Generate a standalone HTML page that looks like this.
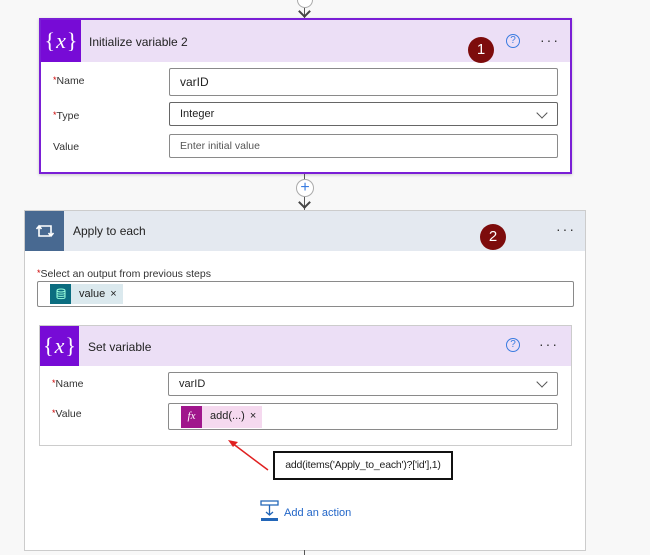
<!DOCTYPE html>
<html><head><style>
*{box-sizing:border-box;margin:0;padding:0}
body{width:650px;height:555px;background:#f8f8f8;position:relative;overflow:hidden;font-family:"Liberation Sans",sans-serif;font-size:11px;color:#222}
.a{position:absolute}
.card{position:absolute;background:#fff}
.hdr{position:absolute;left:0;right:0;top:0}
.ico{position:absolute;left:0;top:0;bottom:0;color:#fff;font-family:"Liberation Serif",serif;font-size:22px;display:flex;align-items:center;justify-content:center}
.t{position:absolute;font-size:12px;color:#222}
.in{position:absolute;background:#fff;border:1px solid #8a8a8a;border-radius:2px;font-size:11px;padding-left:10px;display:flex;align-items:center;line-height:1}
.lbl{position:absolute;font-size:10.5px;color:#333}
.lbl b{color:#c00;font-weight:normal;font-size:9px;vertical-align:top}
.dots{position:absolute;font-size:14px;letter-spacing:2px;color:#333}
.help{position:absolute;width:14px;height:14px;border:1.3px solid #3a7ce0;border-radius:50%;color:#3a7ce0;font-size:10px;text-align:center;line-height:12px}
.badge{position:absolute;width:26px;height:26px;border-radius:50%;background:#7d0c0c;color:#fff;font-size:15px;text-align:center;line-height:26px}
.chev{position:absolute;width:8px;height:8px;border-right:1px solid #555;border-bottom:1px solid #555;transform:rotate(45deg)}
</style></head><body>
<div class="a" style="left:304px;top:0;width:1px;height:18px;background:#555"></div>
<div class="a" style="left:297px;top:-8px;width:16px;height:16px;border:1px solid #aaa;border-radius:50%;background:#fff"></div>
<div class="a" style="left:300px;top:7px;width:9px;height:9px;border-right:2px solid #444;border-bottom:2px solid #444;transform:rotate(45deg)"></div>

<div class="card" style="left:39px;top:18px;width:533px;height:156px;border:2px solid #7a1fd6;box-shadow:0 1px 3px rgba(0,0,0,.2)">
 <div class="hdr" style="height:42px;background:#ecdff6"></div>
 <div class="ico" style="width:40px;height:42px;background:#770bd6">{<i style="margin:0 1px">x</i>}</div>
 <div class="t" style="left:48px;top:15px">Initialize variable 2</div>
 <div class="help" style="left:465px;top:14px">?</div>
 <div class="dots" style="left:499px;top:12px">···</div>
 <div class="lbl" style="left:12px;top:55px"><b>*</b>Name</div>
 <div class="in" style="left:128px;top:48px;width:389px;height:28px;font-size:12px">varID</div>
 <div class="lbl" style="left:12px;top:90px"><b>*</b>Type</div>
 <div class="in" style="left:128px;top:82px;width:389px;height:24px;border-color:#666">Integer</div>
 <div class="chev" style="left:497px;top:89px"></div>
 <div class="lbl" style="left:12px;top:121px">Value</div>
 <div class="in" style="left:128px;top:114px;width:389px;height:24px;color:#555;font-size:10.5px">Enter initial value</div>
</div>
<div class="badge" style="left:468px;top:37px">1</div>

<div class="a" style="left:304px;top:174px;width:1px;height:36px;background:#555"></div>
<div class="a" style="left:296px;top:179px;width:18px;height:18px;border:1px solid #aaa;border-radius:50%;background:#fff;color:#3a7ce0;font-size:16px;line-height:15px;text-align:center">+</div>
<div class="a" style="left:300px;top:198px;width:9px;height:9px;border-right:2px solid #444;border-bottom:2px solid #444;transform:rotate(45deg)"></div>

<div class="card" style="left:24px;top:210px;width:562px;height:341px;border:1px solid #ccc">
 <div class="hdr" style="height:40px;background:#e4e9f0"></div>
 <div class="ico" style="width:39px;height:40px;background:#486991">
  <svg width="20" height="18" viewBox="0 0 20 18" fill="none" stroke="#fff" stroke-width="1.6"><path d="M4 4H16V13M15 14H4V5M1.5 7L4 4L6.5 7M13.5 11L16 14L18.5 11"/></svg>
 </div>
 <div class="t" style="left:48px;top:13px">Apply to each</div>
 <div class="dots" style="left:531px;top:10px">···</div>
 <div class="lbl" style="left:12px;top:57px"><b>*</b>Select an output from previous steps</div>
 <div class="in" style="left:12px;top:70px;width:537px;height:26px;padding-left:12px">
  <span style="display:inline-flex;height:20px;background:#dbe9ee;align-items:center;padding-right:6px">
   <span style="width:21px;height:20px;background:#0b6d80;display:inline-flex;align-items:center;justify-content:center"><svg width="10" height="12" viewBox="0 0 10 12" fill="none" stroke="#9fd" stroke-width="1"><ellipse cx="5" cy="2.5" rx="4" ry="1.5"/><path d="M1 2.5V9.5C1 11 9 11 9 9.5V2.5M1 5C1 6.5 9 6.5 9 5M1 7.3C1 8.8 9 8.8 9 7.3"/></svg></span>
   <span style="margin-left:8px">value</span><span style="margin-left:5px">×</span></span>
 </div>
 <div class="card" style="left:14px;top:114px;width:533px;height:121px;border:1px solid #ccc">
  <div class="hdr" style="height:40px;background:#ecdff6"></div>
  <div class="ico" style="width:39px;height:40px;background:#770bd6">{<i style="margin:0 1px">x</i>}</div>
  <div class="t" style="left:48px;top:14px">Set variable</div>
  <div class="help" style="left:466px;top:12px">?</div>
  <div class="dots" style="left:499px;top:10px">···</div>
  <div class="lbl" style="left:12px;top:52px"><b>*</b>Name</div>
  <div class="in" style="left:128px;top:46px;width:390px;height:24px">varID</div>
  <div class="chev" style="left:498px;top:52px"></div>
  <div class="lbl" style="left:12px;top:82px"><b>*</b>Value</div>
  <div class="in" style="left:128px;top:77px;width:390px;height:27px;padding-left:12px">
   <span style="display:inline-flex;height:22px;background:#f5d9ef;align-items:center;padding-right:6px">
    <span style="width:21px;height:22px;background:#a0168c;color:#fff;font-family:'Liberation Serif',serif;font-style:italic;display:inline-flex;align-items:center;justify-content:center">fx</span>
    <span style="margin-left:8px">add(...)</span><span style="margin-left:5px">×</span></span>
  </div>
 </div>
 <svg class="a" style="left:235px;top:289px" width="19" height="22" viewBox="0 0 19 22" fill="none"><path d="M1 1H18V5H1Z M9.5 5V15 M6 12L9.5 15L13 12" stroke="#2266b8" stroke-width="1.3"/><rect x="1" y="18" width="17" height="3" fill="#2266b8"/></svg>
 <div class="a" style="left:259px;top:296px;color:#2266c8;font-size:11px">Add an action</div>
</div>
<div class="badge" style="left:480px;top:224px">2</div>
<div class="a" style="left:304px;top:550px;width:1px;height:5px;background:#555"></div>

<svg class="a" style="left:225px;top:435px" width="50" height="40"><path d="M43 35L7 8" stroke="#e02020" stroke-width="1.5"/><path d="M3 5L13 7L8 12Z" fill="#e02020"/></svg>
<div class="a" style="left:273px;top:451px;width:180px;height:29px;border:2px solid #111;background:#fff;font-size:10.5px;line-height:25px;text-align:center;letter-spacing:-0.2px">add(items('Apply_to_each')?['id'],1)</div>
</body></html>
